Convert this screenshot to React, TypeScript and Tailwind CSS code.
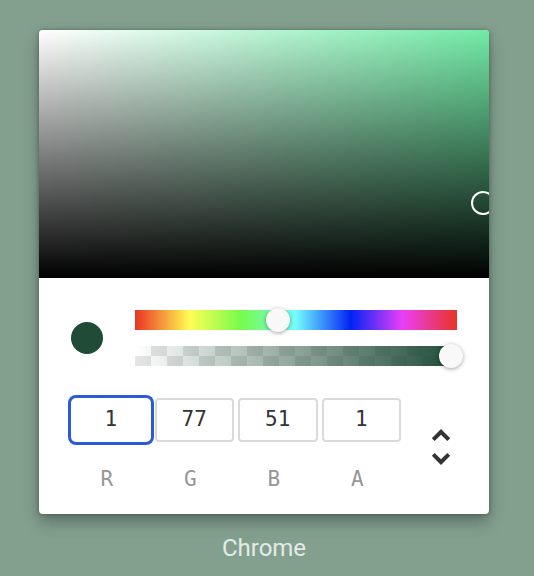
import { useState } from "react";

const hsv = { h: 159.5, s: 0.987, v: 0.302 };
const rgba = { r: 1, g: 77, b: 51, a: 1 };

function UnfoldIcon() {
  return (
    <svg viewBox="0 0 24 24" className="w-12 h-12 fill-[#333]">
      <path d="M12,18.17L8.83,15L7.41,16.41L12,21L16.59,16.41L15.17,15M12,5.83L15.17,9L16.59,7.59L12,3L7.41,7.59L8.83,9L12,5.83Z" />
    </svg>
  );
}

function Field({
  value,
  label,
  focused,
}: {
  value: number;
  label: string;
  focused?: boolean;
}) {
  return (
    <div className="flex flex-col items-stretch">
      <div
        className={`h-[44px] rounded-[4px] flex items-center justify-center text-[21px] text-[#333] ${
          focused
            ? "shadow-[0_0_0_3px_#2a5bd7] rounded-[5px]"
            : "shadow-[inset_0_0_0_2px_#dadada]"
        }`}
      >
        {value}
      </div>
      <div className="mt-[24px] pr-2 text-center text-[21px] leading-[26px] text-[#969696]">
        {label}
      </div>
    </div>
  );
}

export default function App() {
  const [mode] = useState("rgb");

  return (
    <div className="min-h-[576px] bg-[#83a08f] pt-[30px] pl-[39px]">
      <div className="w-[450px] flex flex-col items-center">
        {/* Chrome picker */}
        <div className="w-[450px] bg-white rounded-[4px] shadow-[0_0_4px_rgba(0,0,0,0.3),0_8px_16px_rgba(0,0,0,0.3)] font-['DejaVu_Sans_Mono',monospace]">
          {/* Saturation */}
          <div className="relative h-[248px] rounded-t-[4px] overflow-hidden bg-[#72eaa6]">
            <div className="absolute inset-0 bg-[linear-gradient(to_right,#fff,rgba(255,255,255,0))]" />
            <div className="absolute inset-0 bg-[linear-gradient(to_top,#000,rgba(0,0,0,0))]" />
            <div
              className="absolute w-6 h-6 -ml-3 -mt-3 rounded-full shadow-[inset_0_0_0_2px_#fff]"
              style={{ left: `${hsv.s * 100}%`, top: `${(1 - hsv.v) * 100}%` }}
            />
          </div>

          {/* Body */}
          <div className="px-8 pt-8 pb-[22px]">
            <div className="flex">
              <div className="w-16 shrink-0">
                <div className="mt-3 w-8 h-8 rounded-full bg-[#1f4b37]" />
              </div>
              <div className="flex-1 flex flex-col gap-4">
                {/* Hue */}
                <div className="relative h-5 bg-[linear-gradient(to_right,#ea3323_0%,#fffe54_17%,#75fb4c_33%,#75fbfd_50%,#0023f5_67%,#ea3ff7_83%,#ea3323_100%)]">
                  <div
                    className="absolute -top-[2px] w-6 h-6 -ml-3 rounded-full bg-[#f8f8f8] shadow-[0_1px_4px_rgba(0,0,0,0.37)]"
                    style={{ left: `${(hsv.h / 360) * 100}%` }}
                  />
                </div>
                {/* Alpha */}
                <div className="relative h-5 bg-[conic-gradient(#e6e6e6_25%,#fff_0_50%,#e6e6e6_0_75%,#fff_0)] bg-[length:32px_20px]">
                  <div className="absolute inset-0 bg-[linear-gradient(to_right,rgba(31,75,55,0)_0%,#1f4b37_100%)]" />
                  <div
                    className="absolute -top-[2px] w-6 h-6 -ml-[18px] rounded-full bg-[#f8f8f8] shadow-[0_1px_4px_rgba(0,0,0,0.37)]"
                    style={{ left: `${rgba.a * 100}%` }}
                  />
                </div>
              </div>
            </div>

            {/* Fields */}
            {mode === "rgb" && (
              <div className="flex pt-8">
                <div className="w-[330px] grid grid-cols-4 gap-[4px]">
                  <Field value={rgba.r} label="R" focused />
                  <Field value={rgba.g} label="G" />
                  <Field value={rgba.b} label="B" />
                  <Field value={rgba.a} label="A" />
                </div>
                <div className="flex-1 flex justify-end">
                  <div className="mt-[25px] -mr-2">
                    <UnfoldIcon />
                  </div>
                </div>
              </div>
            )}
          </div>
        </div>

        <div className="mt-[18px] text-[24px] leading-[32px] text-[#e3ebe6] font-['Roboto',sans-serif]">
          Chrome
        </div>
      </div>
    </div>
  );
}
